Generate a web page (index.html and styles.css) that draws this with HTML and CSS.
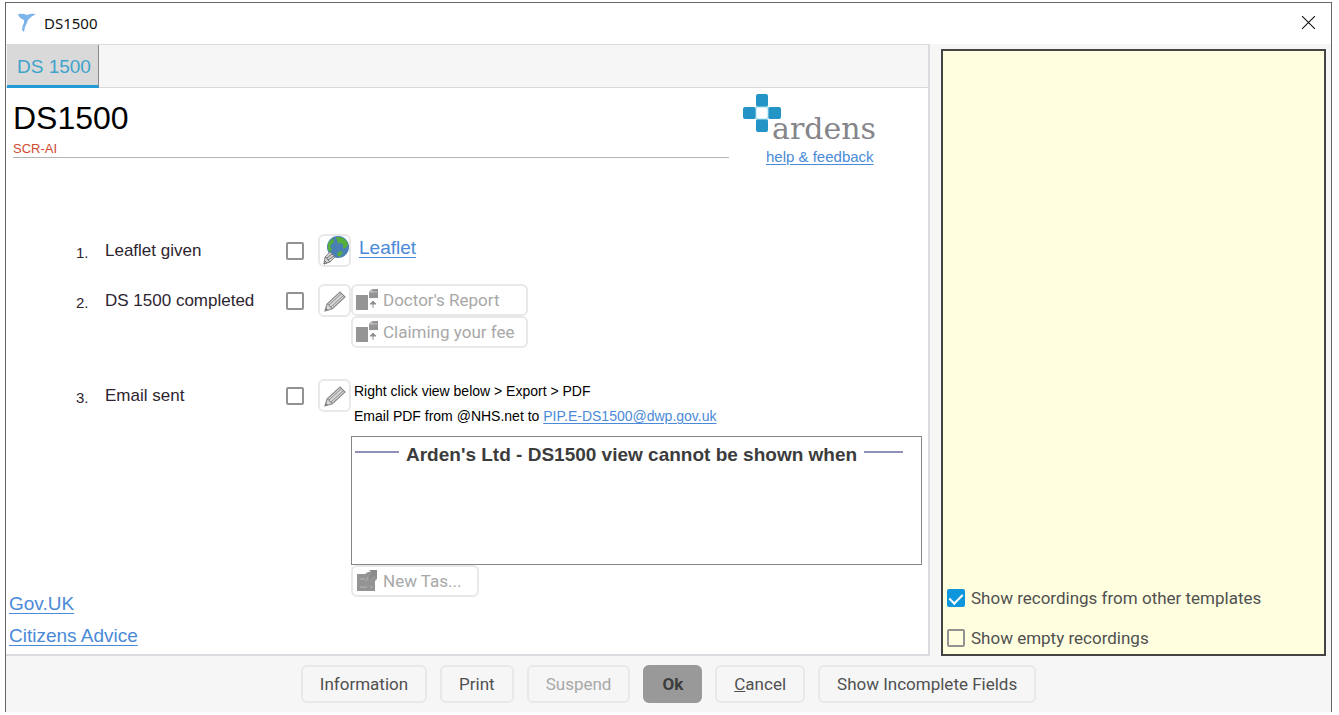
FILE: index.html
```
<!DOCTYPE html>
<html lang="en">
<head>
    <meta charset="UTF-8">
    <meta name="viewport" content="width=device-width, initial-scale=1.0">
    <title>DS1500</title>
    <link rel="stylesheet" href="styles.css">
</head>
<body>
    <!-- shared icons -->
    <svg class="sprite" aria-hidden="true">
        <symbol id="pencil" viewBox="0 0 24 24">
            <path d="M2 22 4 15 17 3 22 8 9 20Z" fill="#d6d6d6" stroke="#8c8c8c" stroke-width="1.2"/>
            <path d="M4 15 6 16 7 18 8 18 9 20M6 16 19 4M8 18 21 6" fill="none" stroke="#8c8c8c"/>
            <path d="M2 22 3 19 5 21Z" fill="#777"/>
        </symbol>
        <symbol id="report" viewBox="0 0 22 22">
            <path d="M0 6H12V21H0ZM16 0H22V9H13V3Z" fill="#949494"/>
            <path d="M13 3H16V0M15 3H21" fill="none" stroke="#c4c4c4"/>
            <path d="M17 19V13M14 15 17 12 20 15Z" fill="#949494" stroke="#949494"/>
        </symbol>
    </svg>

    <div class="window">
        <header class="titlebar">
            <svg class="app-icon" viewBox="0 0 18 20" aria-hidden="true">
                <path d="M0 1Q5 0 9 2Q13 0 18 1L13 4Q10 6 9 10L7 14 6 19 4 17Q4 13 6 10L6 7Q1 5 0 1Z" fill="#7db4ea"/>
            </svg>
            <span>DS1500</span>
            <button class="close" aria-label="Close">
                <svg viewBox="0 0 14 14"><path d="M1 1 13 13M13 1 1 13" stroke="#111" stroke-width="1"/></svg>
            </button>
        </header>

        <main class="main">
            <section class="template">
                <nav class="tabs">
                    <button class="tab">DS 1500</button>
                </nav>

                <div class="page">
                    <div class="content">
                        <div class="heading">
                            <div class="heading-text">
                                <h1>DS1500</h1>
                                <p class="code">SCR-AI</p>
                            </div>
                            <div class="brand">
                                <div class="logo">
                                    <svg class="logo-mark" viewBox="0 0 38 38" aria-hidden="true">
                                        <g fill="#2494c6">
                                            <rect x="13" y="0" width="12" height="13" rx="2"/>
                                            <rect x="0" y="13" width="13" height="12" rx="2"/>
                                            <rect x="25" y="13" width="13" height="12" rx="2"/>
                                            <rect x="13" y="25" width="12" height="13" rx="2"/>
                                        </g>
                                        <rect x="13" y="13" width="12" height="12" rx="2" fill="#fff" stroke="#9edcf0"/>
                                    </svg>
                                    <span class="logo-name">ardens</span>
                                </div>
                                <a class="small-link" href="#">help &amp; feedback</a>
                            </div>
                        </div>

                        <div class="row">
                            <span class="number">1.</span>
                            <label for="leaflet">Leaflet given</label>
                            <input type="checkbox" id="leaflet">
                            <button class="tool" aria-label="Open leaflet">
                                <svg class="globe" viewBox="0 0 28 30">
                                    <circle cx="17" cy="11" r="11" fill="#4a7fb5"/>
                                    <path d="M15 1Q24 0 27 8Q25 14 22 12L22 8 17 7ZM7 7 12 2 13 6 9 10 11 13 9 16 7 14ZM18 15 22 16 19 21 16 19Z" fill="#55ad3b"/>
                                    <path d="M3 28 4 21 9 16 14 21 9 26Z" fill="#d2d2d2" stroke="#858585"/>
                                    <path d="M4 21 6 22 7 24 9 26M6 22 11 18M7 24 13 20M3 28 4 25 6 27Z" fill="none" stroke="#777"/>
                                </svg>
                            </button>
                            <a class="leaflet-link" href="#">Leaflet</a>
                        </div>

                        <div class="row">
                            <span class="number">2.</span>
                            <label for="completed">DS 1500 completed</label>
                            <input type="checkbox" id="completed">
                            <button class="tool" aria-label="Edit DS 1500 completed"><svg><use href="#pencil"/></svg></button>
                            <div class="stack">
                                <button class="action" disabled><svg><use href="#report"/></svg>Doctor's Report</button>
                                <button class="action" disabled><svg><use href="#report"/></svg>Claiming your fee</button>
                            </div>
                        </div>

                        <div class="row">
                            <span class="number">3.</span>
                            <label for="email">Email sent</label>
                            <input type="checkbox" id="email">
                            <button class="tool" aria-label="Edit email sent"><svg><use href="#pencil"/></svg></button>
                            <div class="email">
                                <p>Right click view below &gt; Export &gt; PDF</p>
                                <p>Email PDF from @NHS.net to <a href="mailto:PIP.E-DS1500@dwp.gov.uk">PIP.E-DS1500@dwp.gov.uk</a></p>
                                <div class="view">
                                    <h2>Arden's Ltd - DS1500 view cannot be shown when</h2>
                                </div>
                                <button class="action task" disabled>
                                    <svg viewBox="0 0 22 22">
                                        <path d="M1 4H9L12 2H21V9L19 11V21H1Z" fill="#949494"/>
                                        <path d="M4 9H9M4 17H11M14 17H17M10 11Q11 6 16 5" fill="none" stroke="#b5b5b5"/>
                                        <path d="M13 0H21V8L18 5 14 9 12 7 16 3Z" fill="#8a8a8a"/>
                                    </svg>New Tas...
                                </button>
                            </div>
                        </div>
                    </div>

                    <div class="links">
                        <a href="#">Gov.UK</a>
                        <a href="#">Citizens Advice</a>
                    </div>
                </div>
            </section>

            <aside class="recordings">
                <label><input type="checkbox" checked>Show recordings from other templates</label>
                <label><input type="checkbox">Show empty recordings</label>
            </aside>
        </main>

        <footer class="buttons">
            <button>Information</button>
            <button>Print</button>
            <button disabled>Suspend</button>
            <button class="ok">Ok</button>
            <button><u>C</u>ancel</button>
            <button>Show Incomplete Fields</button>
        </footer>
    </div>
</body>
</html>
```
FILE: styles.css
```
* {
    box-sizing: border-box;
}

body {
    margin: 0;
    padding: 2px 7px 3px 5px;
    min-height: 100vh;
    display: flex;
    background-color: #fff;
    color: #2d2530;
    font-family: "Liberation Sans", Arial, sans-serif;
    font-size: 17px;
}

h1, h2, p {
    margin: 0;
    font-weight: normal;
}

a {
    color: #4a8ad8;
    text-underline-offset: 3px;
}

button {
    padding: 0;
    border: 2px solid #e8e8e8;
    border-radius: 6px;
    background-color: transparent;
    color: #505050;
    font-family: Roboto, sans-serif;
    font-size: 17px;
}

button:disabled {
    color: #a8a8a8;
}

input[type="checkbox"] {
    appearance: none;
    width: 18px;
    height: 18px;
    margin: 0;
    border: 2px solid #929292;
    border-radius: 2px;
}

input[type="checkbox"]:checked {
    border-color: #0d96dc;
    background-color: #0d96dc;
}

input[type="checkbox"]:checked::after {
    content: "";
    display: block;
    width: 6px;
    height: 11px;
    margin: 0 auto;
    border: solid #fff;
    border-width: 0 2px 2px 0;
    transform: rotate(45deg);
}

.sprite {
    display: none;
}

.window {
    flex: 1;
    display: flex;
    flex-direction: column;
    border: 1px solid #666;
    border-bottom: none;
    background-color: #f6f6f6;
}

.titlebar {
    display: flex;
    align-items: center;
    height: 41px;
    padding: 0 15px 2px 12px;
    gap: 8px;
    background-color: #fff;
    color: #111;
    font-family: "Noto Sans", sans-serif;
    font-size: 15px;
}

.app-icon {
    width: 18px;
    height: 20px;
}

.close {
    display: flex;
    margin-left: auto;
    border: none;
}

.close svg {
    width: 15px;
    height: 15px;
}

.main {
    flex: 1;
    display: flex;
    gap: 11px;
    padding-right: 5px;
}

.template {
    flex: 1;
    display: flex;
    flex-direction: column;
    border: 1px solid #dcdce0;
    border-width: 1px 2px 2px 0;
}

.tabs {
    display: flex;
    height: 43px;
    border-bottom: 1px solid #d8d8d8;
}

.tab {
    padding: 4px 7px 0 10px;
    margin: 0 0 -1px 1px;
    border: none;
    border-right: 1px solid #888;
    border-bottom: 3px solid #1e9ad6;
    border-radius: 0;
    background-color: #d9d9d9;
    color: #3fa3cc;
    font-family: inherit;
    font-size: 19px;
}

/* links share the grid cell with the form and sit at its bottom */
.page {
    flex: 1;
    display: grid;
    background-color: #fff;
}

.content,
.links {
    grid-area: 1 / 1;
}

.content {
    display: flex;
    flex-direction: column;
    padding: 6px 6px 20px 7px;
}

.heading {
    display: flex;
    gap: 14px;
    margin-bottom: 64px;
}

.heading-text {
    flex: 1;
    align-self: flex-start;
    border-bottom: 1px solid #b4b4b4;
}

h1 {
    padding-top: 6px;
    color: #000;
    font-size: 32px;
    line-height: 36px;
}

.code {
    padding-top: 5px;
    color: #d04a30;
    font-size: 13px;
    line-height: 16px;
}

.brand {
    width: 179px;
    height: 76px;
}

.logo {
    display: flex;
}

.logo-mark {
    width: 38px;
    height: 38px;
}

.logo-name {
    margin: 16px 0 0 -9px;
    color: #85858a;
    font-family: "DejaVu Serif", serif;
    font-size: 30px;
    line-height: 37px;
}

.small-link {
    display: block;
    margin-left: 23px;
    font-size: 15px;
    line-height: 20px;
    text-underline-offset: 2px;
}

.row {
    display: grid;
    grid-template-columns: 29px 181px 32px 33px 1fr;
    align-items: start;
    margin: 0 0 15px 63px;
    line-height: 33px;
}

.row input {
    margin-top: 8px;
}

.number {
    padding-top: 2px;
    font-size: 15px;
}

.tool {
    display: flex;
    align-items: center;
    justify-content: center;
    width: 33px;
    height: 33px;
}

.tool svg {
    flex: none;
    width: 24px;
    height: 24px;
}

.tool .globe {
    width: 28px;
    height: 30px;
}

.leaflet-link {
    padding-left: 8px;
    font-size: 19px;
    line-height: 28px;
}

.stack {
    display: flex;
    flex-direction: column;
    width: 177px;
    padding-bottom: 16px;
}

.action {
    display: flex;
    align-items: center;
    gap: 5px;
    height: 32px;
    padding: 0 3px;
}

.action svg {
    width: 22px;
    height: 22px;
}

.email {
    display: flex;
    flex-direction: column;
    align-items: flex-start;
}

.email p {
    padding-left: 3px;
    color: #000;
    font-size: 14px;
    line-height: 25px;
}

.email a {
    text-underline-offset: 2px;
}

.view {
    align-self: stretch;
    height: 129px;
    margin-top: 7px;
    padding: 7px 18px 0 3px;
    border: 1px solid #858585;
}

.view h2 {
    display: flex;
    gap: 7px;
    color: #3c3c3c;
    font-size: 19px;
    font-weight: bold;
    line-height: 22px;
    white-space: nowrap;
}

.view h2::before,
.view h2::after {
    content: "";
    height: 2px;
    margin-top: 7px;
    background-color: #9090ba;
}

.view h2::before {
    width: 44px;
}

.view h2::after {
    flex: 1;
}

.task {
    width: 128px;
}

.links {
    align-self: end;
    justify-self: start;
    display: flex;
    flex-direction: column;
    gap: 12px;
    padding: 0 0 8px 3px;
    font-size: 19px;
    line-height: 20px;
}

.recordings {
    width: 385px;
    display: flex;
    flex-direction: column;
    justify-content: flex-end;
    gap: 20px;
    margin-top: 5px;
    padding: 0 4px 6px;
    border: 2px solid #444;
    background-color: #ffffe0;
    color: #505050;
    font-family: Roboto, sans-serif;
    line-height: 20px;
}

.recordings label {
    display: flex;
    align-items: center;
    gap: 6px;
}

.buttons {
    display: flex;
    justify-content: center;
    gap: 13px;
    padding: 9px 0;
}

.buttons button {
    height: 38px;
    padding: 0 17px;
}

.buttons .ok {
    border-color: #999;
    background-color: #999;
    color: #3c3c3c;
    font-weight: bold;
}
```
